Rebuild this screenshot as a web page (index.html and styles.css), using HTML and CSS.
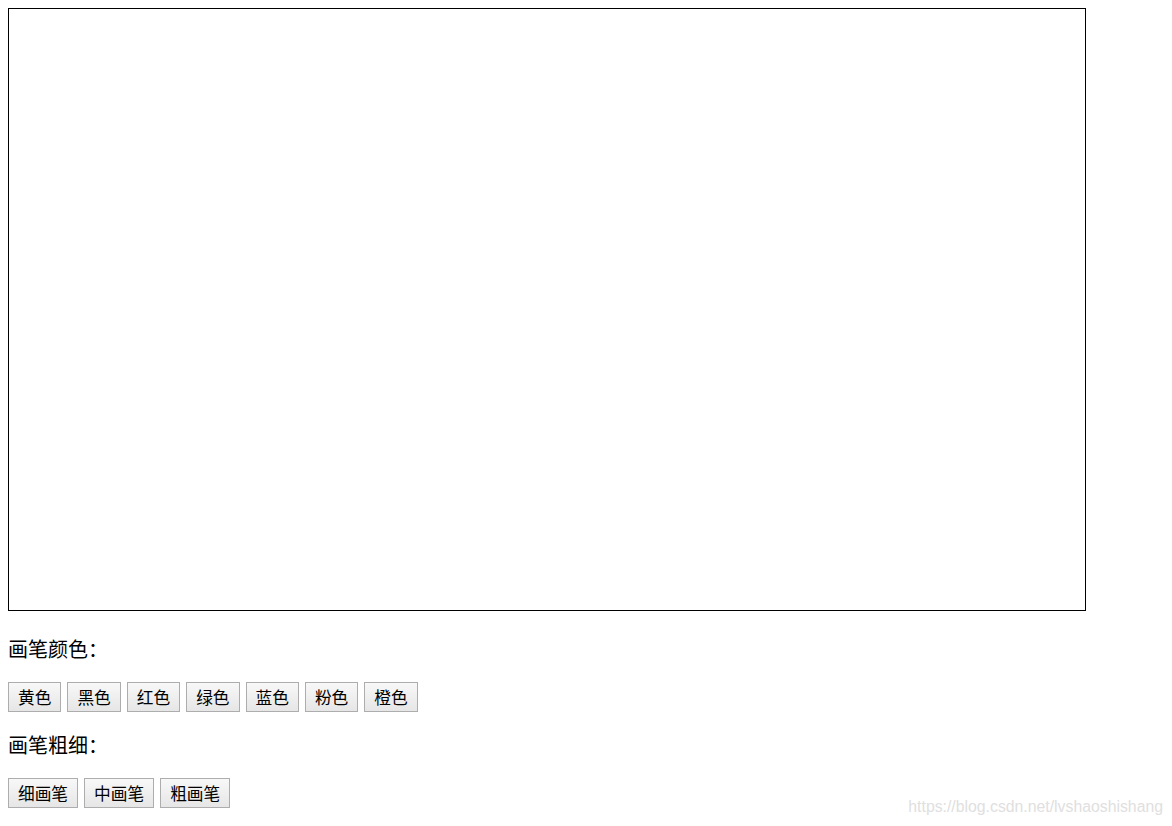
FILE: index.html
```html
<!DOCTYPE html>
<html lang="zh-CN">
<head>
<meta charset="utf-8">
<title>画板</title>
<link rel="stylesheet" href="styles.css">
</head>
<body>
<canvas class="board" width="1076" height="601"></canvas>
<p class="label">画笔颜色：</p>
<div class="btns">
  <button class="btn">黄色</button>
  <button class="btn">黑色</button>
  <button class="btn">红色</button>
  <button class="btn">绿色</button>
  <button class="btn">蓝色</button>
  <button class="btn">粉色</button>
  <button class="btn">橙色</button>
</div>
<p class="label">画笔粗细：</p>
<div class="btns">
  <button class="btn">细画笔</button>
  <button class="btn">中画笔</button>
  <button class="btn">粗画笔</button>
</div>
<div class="watermark">https://blog.csdn.net/lvshaoshishang</div>
</body>
</html>
```
FILE: styles.css
```css
html, body {
  background: #fff;
}
body {
  margin: 8px;
  font-family: "Noto Sans CJK SC", "Microsoft YaHei", sans-serif;
  color: #000;
}
.board {
  display: block;
  width: 1076px;
  height: 601px;
  border: 1px solid #000;
  margin-bottom: 25px;
}
.label {
  font-size: 20px;
  line-height: 26px;
  margin: 20px 0 20px;
}
.btns {
  display: flex;
  gap: 6px;
}
.btn {
  font-family: "Noto Sans CJK SC", "Microsoft YaHei", sans-serif;
  font-size: 16.7px;
  line-height: 20px;
  height: 30px;
  padding: 0 9px;
  margin: 0;
  border: 1px solid #adadad;
  border-radius: 0;
  background: linear-gradient(#f8f8f8, #e6e6e6);
  color: #000;
}
.watermark {
  position: absolute;
  right: 9px;
  top: 798px;
  font-family: "Liberation Sans", Arial, sans-serif;
  font-size: 15.8px;
  color: #e0e0e0;
}
```
